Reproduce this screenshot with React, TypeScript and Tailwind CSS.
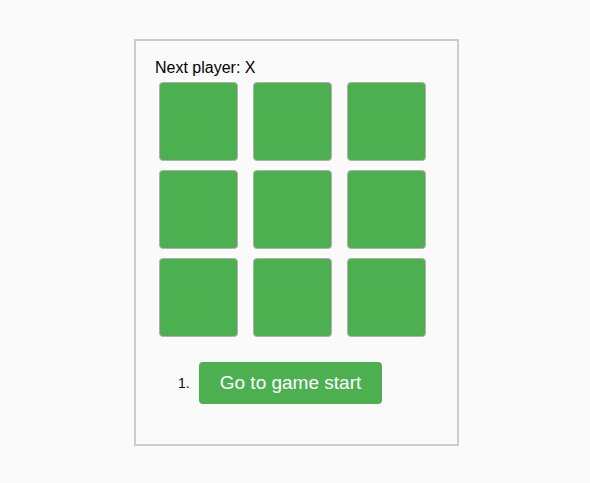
export default function App() {
  const squares = Array.from({ length: 9 });
  return (
    <div className="min-h-[483px] bg-[#fafafa] pt-[39px] font-['Liberation_Sans',Arial,sans-serif] text-black">
      <div className="ml-[134px] h-[407px] w-[325px] border-2 border-[#cccccc] bg-[#fafafa] pl-[19px] pt-[18px]">
        <div className="text-[16px] leading-[18px]">Next player: X</div>
        <div className="ml-[4px] mt-[5px] grid w-[267px] grid-cols-[79px_79px_79px] gap-x-[15px] gap-y-[9px]">
          {squares.map((_, i) => (
            <button
              key={i}
              className="h-[79px] w-[79px] rounded-[4px] border border-[#b0b0b0] bg-[#4caf50]"
            />
          ))}
        </div>
        <ol className="ml-[23px] mt-[25px] flex items-center">
          <li className="flex items-center">
            <span className="w-[21px] text-[14px] text-[#111]">1.</span>
            <button className="h-[42px] w-[183px] rounded-[4px] bg-[#4caf50] text-[19px] text-white">
              Go to game start
            </button>
          </li>
        </ol>
      </div>
    </div>
  );
}
